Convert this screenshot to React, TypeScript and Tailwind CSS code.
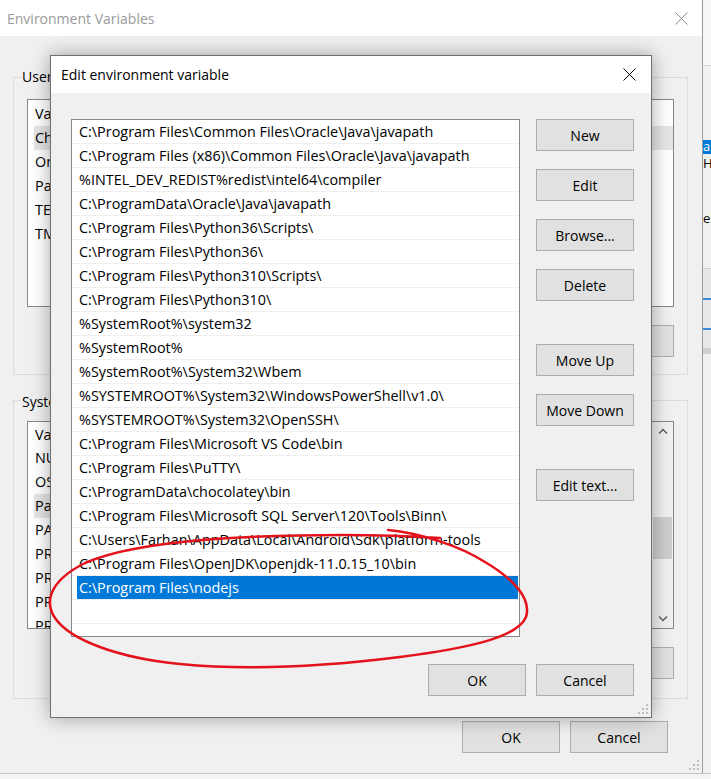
import React from "react";

const pathItems = [
  "C:\\Program Files\\Common Files\\Oracle\\Java\\javapath",
  "C:\\Program Files (x86)\\Common Files\\Oracle\\Java\\javapath",
  "%INTEL_DEV_REDIST%redist\\intel64\\compiler",
  "C:\\ProgramData\\Oracle\\Java\\javapath",
  "C:\\Program Files\\Python36\\Scripts\\",
  "C:\\Program Files\\Python36\\",
  "C:\\Program Files\\Python310\\Scripts\\",
  "C:\\Program Files\\Python310\\",
  "%SystemRoot%\\system32",
  "%SystemRoot%",
  "%SystemRoot%\\System32\\Wbem",
  "%SYSTEMROOT%\\System32\\WindowsPowerShell\\v1.0\\",
  "%SYSTEMROOT%\\System32\\OpenSSH\\",
  "C:\\Program Files\\Microsoft VS Code\\bin",
  "C:\\Program Files\\PuTTY\\",
  "C:\\ProgramData\\chocolatey\\bin",
  "C:\\Program Files\\Microsoft SQL Server\\120\\Tools\\Binn\\",
  "C:\\Users\\Farhan\\AppData\\Local\\Android\\Sdk\\platform-tools",
  "C:\\Program Files\\OpenJDK\\openjdk-11.0.15_10\\bin",
  "C:\\Program Files\\nodejs",
];

const userVars = [
  { n: "ChocolateyLastPathUpdate", sel: true },
  { n: "OneDrive", sel: false },
  { n: "Path", sel: false },
  { n: "TEMP", sel: false },
  { n: "TMP", sel: false },
];

const sysVars = [
  { n: "NUMBER_OF_PROCESSORS", sel: false },
  { n: "OS", sel: false },
  { n: "Path", sel: true },
  { n: "PATHEXT", sel: false },
  { n: "PROCESSOR_ARCHITECTURE", sel: false },
  { n: "PROCESSOR_IDENTIFIER", sel: false },
  { n: "PROCESSOR_LEVEL", sel: false },
  { n: "PROCESSOR_REVISION", sel: false },
];

function CloseX({ color, size = 13 }: { color: string; size?: number }) {
  return (
    <svg width={size} height={size} viewBox="0 0 13 13">
      <path d="M0.5 0.5 L12.5 12.5 M12.5 0.5 L0.5 12.5" stroke={color} strokeWidth="1" fill="none" />
    </svg>
  );
}

function Grip() {
  return (
    <svg width="10" height="10" viewBox="0 0 10 10">
      <rect x="8" y="0" width="2" height="2" fill="#bdbdbd" />
      <rect x="4" y="4" width="2" height="2" fill="#bdbdbd" />
      <rect x="8" y="4" width="2" height="2" fill="#bdbdbd" />
      <rect x="0" y="8" width="2" height="2" fill="#bdbdbd" />
      <rect x="4" y="8" width="2" height="2" fill="#bdbdbd" />
      <rect x="8" y="8" width="2" height="2" fill="#bdbdbd" />
    </svg>
  );
}

function Btn({ label, cls = "" }: { label: string; cls?: string }) {
  return (
    <div
      className={`flex h-[32px] w-[98px] items-center justify-center border border-[#adadad] bg-[#e1e1e1] text-[14px] text-black ${cls}`}
    >
      {label}
    </div>
  );
}

function BackList({
  items,
  height,
  scroll,
}: {
  items: { n: string; sel: boolean }[];
  height: string;
  scroll?: boolean;
}) {
  return (
    <div className={`relative flex border border-[#828790] bg-white ${height}`}>
      <div className="flex flex-1 flex-col overflow-hidden pl-[6px] pt-[2px] text-[14.4px]">
        <div className="flex h-[24px] items-center pl-[1px]">Variable</div>
        {items.map((it, i) => (
          <div
            key={i}
            className={`flex h-[24px] shrink-0 items-center pl-[1px] ${it.sel ? "bg-[#e5e5e5]" : ""}`}
          >
            {it.n}
          </div>
        ))}
      </div>
      {scroll && (
        <div className="flex w-[21px] flex-col items-center bg-[#f0f0f0] py-[6px]">
          <svg width="10" height="6" viewBox="0 0 10 6">
            <path d="M1 5.5 L5 1.5 L9 5.5" stroke="#606060" strokeWidth="1.5" fill="none" />
          </svg>
          <div className="mt-[83px] h-[42px] w-[19px] bg-[#cdcdcd]" />
          <div className="flex-1" />
          <svg width="10" height="6" viewBox="0 0 10 6">
            <path d="M1 0.5 L5 4.5 L9 0.5" stroke="#606060" strokeWidth="1.5" fill="none" />
          </svg>
        </div>
      )}
    </div>
  );
}

export default function App() {
  return (
    <div className="relative h-[779px] w-[711px] overflow-hidden bg-[#f0f0f0] font-['Open_Sans','Noto_Sans',sans-serif] text-[14px] text-black">
      <div className="flex h-[773px]">
        {/* Back window */}
        <div className="flex w-[703px] flex-col border-r border-[#9c9c9c]">
          <div className="flex h-[36px] items-center justify-between bg-white pl-[7px] pr-[14px]">
            <span className="text-[14px] text-[#9a9a9a]">Environment Variables</span>
            <CloseX color="#8a8a8a" />
          </div>
          <div className="relative flex flex-1 flex-col bg-[#f0f0f0] pl-[13px] pr-[14px]">
            {/* User group */}
            <div className="relative mt-[41px] border border-[#dcdcdc] px-[13px] pb-[17px] pt-[21px]">
              <div className="absolute left-[7px] top-[-11px] bg-[#f0f0f0] px-[1px] leading-[20px]">
                User variables for Farhan
              </div>
              <BackList items={userVars} height="h-[208px]" />
              <div className="mt-[18px] flex justify-end gap-[10px]">
                <Btn label="New..." />
                <Btn label="Edit..." />
                <Btn label="Delete" cls="w-[94px]" />
              </div>
            </div>
            {/* System group */}
            <div className="relative mt-[25px] border border-[#dcdcdc] px-[13px] pb-[19px] pt-[20px]">
              <div className="absolute left-[7px] top-[-9px] bg-[#f0f0f0] px-[1px] leading-[20px]">
                System variables
              </div>
              <BackList items={sysVars} height="h-[208px]" scroll />
              <div className="mt-[18px] flex justify-end gap-[10px]">
                <Btn label="New..." />
                <Btn label="Edit..." />
                <Btn label="Delete" cls="w-[22px]" />
              </div>
            </div>
            <div className="mt-[22px] flex justify-end gap-[10px] pr-[20px]">
              <Btn label="OK" />
              <Btn label="Cancel" />
            </div>
            <div className="absolute bottom-[3px] right-[3px]">
              <Grip />
            </div>
          </div>
        </div>
        {/* Window behind, right edge */}
        <div className="flex w-[8px] flex-col bg-[#f0f0f0]">
          <div className="h-[66px] border-b border-[#d8d8d8] bg-[#f6f6f6]" />
          <div className="h-[74px]" />
          <div className="flex h-[14px] items-center overflow-hidden bg-[#0078d7] text-[13px] text-white">a</div>
          <div className="flex h-[20px] items-center overflow-hidden text-[13px]">H;</div>
          <div className="h-[36px]" />
          <div className="flex h-[18px] items-center overflow-hidden text-[13px]">el</div>
          <div className="h-[40px]" />
          <div className="h-[30px] border-t border-[#cfcfcf] bg-[#e6e6e6]" />
          <div className="h-[30px] border-t-2 border-[#3c8ad6] bg-[#e8e8e8]" />
          <div className="h-[20px] border-t-2 border-[#3c8ad6] bg-[#e8e8e8]" />
          <div className="h-[6px] bg-[#d0d0d0]" />
          <div className="flex-1 bg-[#f0f0f0]" />
        </div>
      </div>
      <div className="h-[6px] border-t border-[#c4c4c4] bg-[#f4f4f4]" />

      {/* Front dialog */}
      <div className="absolute left-[50px] top-[55px] flex h-[663px] w-[602px] flex-col border border-[#707070] bg-[#f0f0f0] shadow-[0_0_18px_rgba(0,0,0,0.35)]">
        <div className="flex h-[37px] shrink-0 items-center justify-between bg-white pl-[10px] pr-[15px]">
          <span className="text-[14px]">Edit environment variable</span>
          <CloseX color="#000000" />
        </div>
        <div className="relative flex flex-1 flex-col pl-[20px] pr-[17px]">
          <div className="mt-[26px] flex">
            <div className="flex h-[518px] w-[449px] flex-col border border-[#828790] bg-white text-[14.4px]">
              {pathItems.map((p, i) => {
                const sel = i === pathItems.length - 1;
                return (
                  <div key={i} className="h-[24px] shrink-0 border-b border-[#efefef]">
                    <div
                      className={`ml-[5px] mr-[1px] flex h-[23px] items-center whitespace-nowrap pl-[2px] pt-[1px] ${sel ? "bg-[#0078d7] text-white" : ""}`}
                    >
                      {p}
                    </div>
                  </div>
                );
              })}
              <div className="h-[24px] shrink-0 border-b border-[#efefef]" />
            </div>
            <div className="ml-[16px] flex flex-col">
              <Btn label="New" />
              <Btn label="Edit" cls="mt-[18px]" />
              <Btn label="Browse..." cls="mt-[18px]" />
              <Btn label="Delete" cls="mt-[18px]" />
              <Btn label="Move Up" cls="mt-[43px]" />
              <Btn label="Move Down" cls="mt-[18px]" />
              <Btn label="Edit text..." cls="mt-[43px]" />
            </div>
          </div>
          <div className="mt-[27px] flex justify-end gap-[10px]">
            <Btn label="OK" />
            <Btn label="Cancel" />
          </div>
          <div className="absolute bottom-[3px] right-[3px]">
            <Grip />
          </div>
        </div>
      </div>

      {/* Red hand-drawn annotation */}
      <svg className="pointer-events-none absolute left-0 top-0" width="711" height="779" viewBox="0 0 711 779">
        <path
          d="M 388 530 C 420 533, 460 546, 485 562 C 512 578, 532 598, 526 617 C 518 637, 470 648, 400 657 C 320 667, 240 670, 180 664 C 118 658, 70 640, 55 618 C 42 598, 55 578, 85 563 C 120 548, 180 540, 250 537 C 320 534, 380 534, 440 538"
          stroke="#e3121b"
          strokeWidth="2.5"
          fill="none"
          strokeLinecap="round"
        />
      </svg>
    </div>
  );
}
